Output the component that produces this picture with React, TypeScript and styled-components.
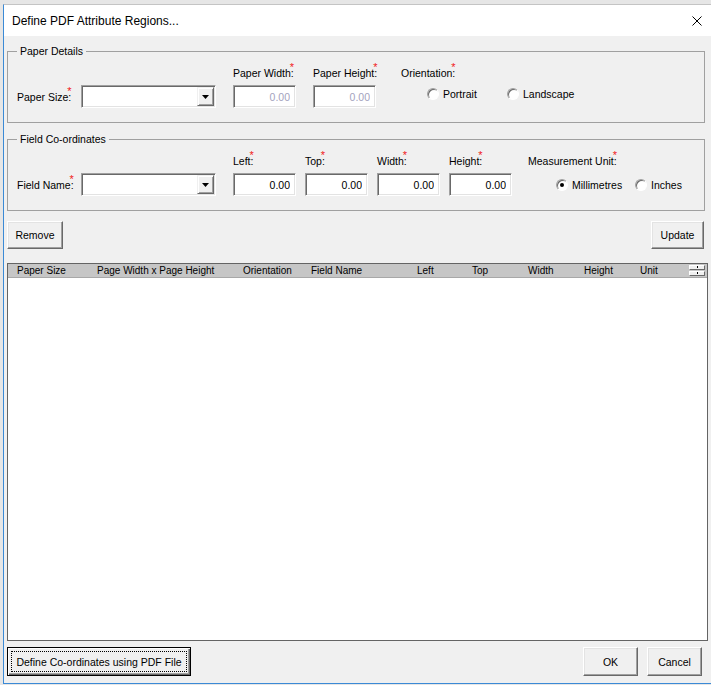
import React from 'react';
import styled, { createGlobalStyle, css } from 'styled-components';

const GlobalStyle = createGlobalStyle`
  html, body {
    margin: 0;
    padding: 0;
  }
  body {
    background: #e6e6e6;
    font-family: "Liberation Sans", Arial, sans-serif;
    overflow: hidden;
  }
`

const Screen = styled.div`
  width: 711px;
  height: 685px;
  box-sizing: border-box;
  padding: 4px 0 0 3px;
  overflow: hidden;
`

const Window = styled.div`
  width: 708px;
  height: 680px;
  box-sizing: border-box;
  border-top: 1px solid #c4c4c4;
  border-left: 1px solid #3b8ad6;
  border-bottom: 1px solid #3b8ad6;
  background: #f0f0f0;
  display: flex;
  flex-direction: column;
`

const TitleBar = styled.div`
  height: 31px;
  flex-shrink: 0;
  background: #fff;
  display: flex;
  align-items: center;
  justify-content: space-between;
  padding: 0 9px 0 8px;
  font-size: 12px;
  color: #000;
`

const Body = styled.div`
  flex: 1;
  min-height: 0;
  display: flex;
  flex-direction: column;
  padding: 8px 3px 7px 3px;
`

const Group = styled.fieldset<{ $top?: number }>`
  margin: ${p => p.$top || 0}px 3px 0 0;
  padding: 8px 0 14px 9px;
  border: 1px solid #a0a0a0;
  display: flex;
  align-items: flex-end;
  min-width: 0;
`

const Legend = styled.legend`
  padding: 0 3px;
  font-size: 10.5px;
  line-height: 14px;
  color: #000;
`

const Field = styled.div<{ $ml?: number; $w?: number }>`
  display: flex;
  flex-direction: column;
  gap: 5px;
  margin-left: ${p => p.$ml || 0}px;
  width: ${p => (p.$w ? `${p.$w}px` : 'auto')};
`

const InlineField = styled.div`
  display: flex;
  align-items: center;
  height: 23px;
`

// required marker sits raised over the colon, like the VBA form
const Label = styled.div<{ $w?: number; $req?: boolean }>`
  font-size: 10.5px;
  line-height: 14px;
  color: #000;
  white-space: nowrap;
  width: ${p => (p.$w ? `${p.$w}px` : 'auto')};
  ${p => p.$req && css`
    &::after {
      content: '*';
      color: #f01818;
      font-size: 11px;
      position: relative;
      top: -6px;
      margin-left: -4px;
    }
  `}
`

const TextBox = styled.input`
  width: 63px;
  height: 23px;
  box-sizing: border-box;
  margin: 0;
  border: 1px solid;
  border-color: #a0a0a0 #fff #fff #a0a0a0;
  box-shadow: inset 1px 1px 0 #696969, inset -1px -1px 0 #e3e3e3;
  background: #fff;
  text-align: right;
  padding: 0 5px 0 0;
  font-family: "Liberation Sans", Arial, sans-serif;
  font-size: 10.5px;
  color: #000;
  outline: none;
  &:disabled {
    color: #a3a3bd;
    background: #fff;
  }
`

const Combo = styled.div`
  width: 135px;
  height: 23px;
  box-sizing: border-box;
  border: 1px solid;
  border-color: #a0a0a0 #fff #fff #a0a0a0;
  box-shadow: inset 1px 1px 0 #696969, inset -1px -1px 0 #e3e3e3;
  background: #fff;
  display: flex;
  justify-content: flex-end;
  padding: 1px;
`

const DropButton = styled.div`
  width: 17px;
  box-sizing: border-box;
  background: #f0f0f0;
  border: 1px solid;
  border-color: #f0f0f0 #696969 #696969 #f0f0f0;
  box-shadow: inset 1px 1px 0 #fff, inset -1px -1px 0 #a0a0a0;
  display: flex;
  align-items: center;
  justify-content: center;
`

const RadioRow = styled.div<{ $indent: number; $lift?: number }>`
  display: flex;
  align-items: center;
  height: 23px;
  box-sizing: border-box;
  padding-left: ${p => p.$indent}px;
  padding-bottom: ${p => p.$lift || 0}px;
`

const RadioItem = styled.label<{ $w?: number }>`
  display: flex;
  align-items: center;
  gap: 4px;
  width: ${p => (p.$w ? `${p.$w}px` : 'auto')};
  font-size: 10.5px;
  color: #000;
  white-space: nowrap;
`

const RadioCircle = styled.span<{ $checked?: boolean }>`
  width: 12px;
  height: 12px;
  box-sizing: border-box;
  border-radius: 50%;
  border: 1px solid;
  border-color: #a0a0a0 #ffffff #ffffff #a0a0a0;
  box-shadow: inset 1px 1px 0 #696969;
  background: #fff;
  display: inline-flex;
  align-items: center;
  justify-content: center;
  &::after {
    content: '';
    width: 4px;
    height: 4px;
    border-radius: 50%;
    background: ${p => (p.$checked ? '#000' : 'transparent')};
  }
`

const ButtonRow = styled.div<{ $top: number }>`
  display: flex;
  justify-content: space-between;
  align-items: center;
  margin-top: ${p => p.$top}px;
  flex-shrink: 0;
`

const Button = styled.button<{ $w: number; $h?: number; $mr?: number }>`
  width: ${p => p.$w}px;
  height: ${p => p.$h || 28}px;
  margin: 0 ${p => p.$mr || 0}px 0 0;
  box-sizing: border-box;
  padding: 0;
  background: #f0f0f0;
  border: 1px solid;
  border-color: #fff #696969 #696969 #fff;
  box-shadow: inset -1px -1px 0 #a0a0a0, inset 1px 1px 0 #e3e3e3;
  font-family: "Liberation Sans", Arial, sans-serif;
  font-size: 10.5px;
  color: #000;
`

const DefaultButton = styled(Button)`
  border: 1px solid #000;
  box-shadow: inset 1px 1px 0 #fff, inset -1px -1px 0 #696969, inset -2px -2px 0 #a0a0a0;
  padding: 3px;
`

const FocusRect = styled.span`
  display: flex;
  align-items: center;
  justify-content: center;
  height: 100%;
  box-sizing: border-box;
  border: 1px dotted #000;
`

const Right = styled.div`
  display: flex;
  gap: 9px;
`

const ListView = styled.div`
  flex: 1;
  min-height: 0;
  margin-top: 14px;
  border: 1px solid #646464;
  background: #fff;
  display: flex;
  flex-direction: column;
`

const HeaderRow = styled.div`
  height: 13px;
  background: #c6c6c6;
  border-bottom: 1px solid #a8a8a8;
  display: flex;
  align-items: center;
`

const HeaderGrid = styled.div`
  flex: 1;
  display: grid;
  grid-template-columns: 80px 146px 68px 106px 55px 56px 56px 56px 1fr;
  font-size: 10px;
  color: #000;
`

const HeaderCell = styled.div`
  padding-left: 9px;
  white-space: nowrap;
  line-height: 13px;
`

const HeaderSpin = styled.div`
  width: 16px;
  display: flex;
  flex-direction: column;
  gap: 1px;
  margin-right: 2px;
`

const SpinPart = styled.div`
  height: 5px;
  box-sizing: border-box;
  background: #f0f0f0;
  border: 1px solid;
  border-color: #fff #696969 #696969 #fff;
  display: flex;
  justify-content: center;
  &::after {
    content: '';
    width: 1px;
    height: 2px;
    background: #000;
  }
`

const columns = ['Paper Size', 'Page Width x Page Height', 'Orientation', 'Field Name', 'Left', 'Top', 'Width', 'Height', 'Unit']

function ComboBox() {
  return (
    <Combo>
      <DropButton>
        <svg width="7" height="4" viewBox="0 0 7 4">
          <path d="M0 0h7L3.5 4z" fill="#000" />
        </svg>
      </DropButton>
    </Combo>
  )
}

function NumberField({ label, ml, disabled }: { label: string; ml: number; disabled?: boolean }) {
  return (
    <Field $ml={ml} $w={63}>
      <Label $req>{label}</Label>
      <TextBox readOnly disabled={disabled} value="0.00" />
    </Field>
  )
}

function Radio({ text, w, checked }: { text: string; w?: number; checked?: boolean }) {
  return (
    <RadioItem $w={w}>
      <RadioCircle $checked={checked} />
      {text}
    </RadioItem>
  )
}

function App() {
  return (
    <Screen>
      <GlobalStyle />
      <Window>
        <TitleBar>
          <span>Define PDF Attribute Regions...</span>
          <svg width="10" height="10" viewBox="0 0 10 10">
            <path d="M0.5 0.5L9.5 9.5M9.5 0.5L0.5 9.5" stroke="#000" strokeWidth="1" />
          </svg>
        </TitleBar>
        <Body>
          <Group>
            <Legend>Paper Details</Legend>
            <InlineField>
              <Label $w={64} $req>Paper Size:</Label>
              <ComboBox />
            </InlineField>
            <NumberField label="Paper Width:" ml={17} disabled />
            <NumberField label="Paper Height:" ml={17} disabled />
            <Field $ml={25}>
              <Label $req>Orientation:</Label>
              <RadioRow $indent={26} $lift={6}>
                <Radio text="Portrait" w={80} />
                <Radio text="Landscape" />
              </RadioRow>
            </Field>
          </Group>

          <Group $top={9}>
            <Legend>Field Co-ordinates</Legend>
            <InlineField>
              <Label $w={64} $req>Field Name:</Label>
              <ComboBox />
            </InlineField>
            <NumberField label="Left:" ml={17} />
            <NumberField label="Top:" ml={9} />
            <NumberField label="Width:" ml={9} />
            <NumberField label="Height:" ml={9} />
            <Field $ml={16}>
              <Label $req>Measurement Unit:</Label>
              <RadioRow $indent={28}>
                <Radio text="Millimetres" w={79} checked />
                <Radio text="Inches" />
              </RadioRow>
            </Field>
          </Group>

          <ButtonRow $top={10}>
            <Button $w={56}>Remove</Button>
            <Button $w={53} $mr={4}>Update</Button>
          </ButtonRow>

          <ListView>
            <HeaderRow>
              <HeaderGrid>
                {columns.map(c => (
                  <HeaderCell key={c}>{c}</HeaderCell>
                ))}
              </HeaderGrid>
              <HeaderSpin>
                <SpinPart />
                <SpinPart />
              </HeaderSpin>
            </HeaderRow>
          </ListView>

          <ButtonRow $top={6}>
            <DefaultButton $w={184} $h={29}>
              <FocusRect>Define Co-ordinates using PDF File</FocusRect>
            </DefaultButton>
            <Right>
              <Button $w={55} $h={29}>OK</Button>
              <Button $w={55} $h={29} $mr={6}>Cancel</Button>
            </Right>
          </ButtonRow>
        </Body>
      </Window>
    </Screen>
  );
}

export default App;
